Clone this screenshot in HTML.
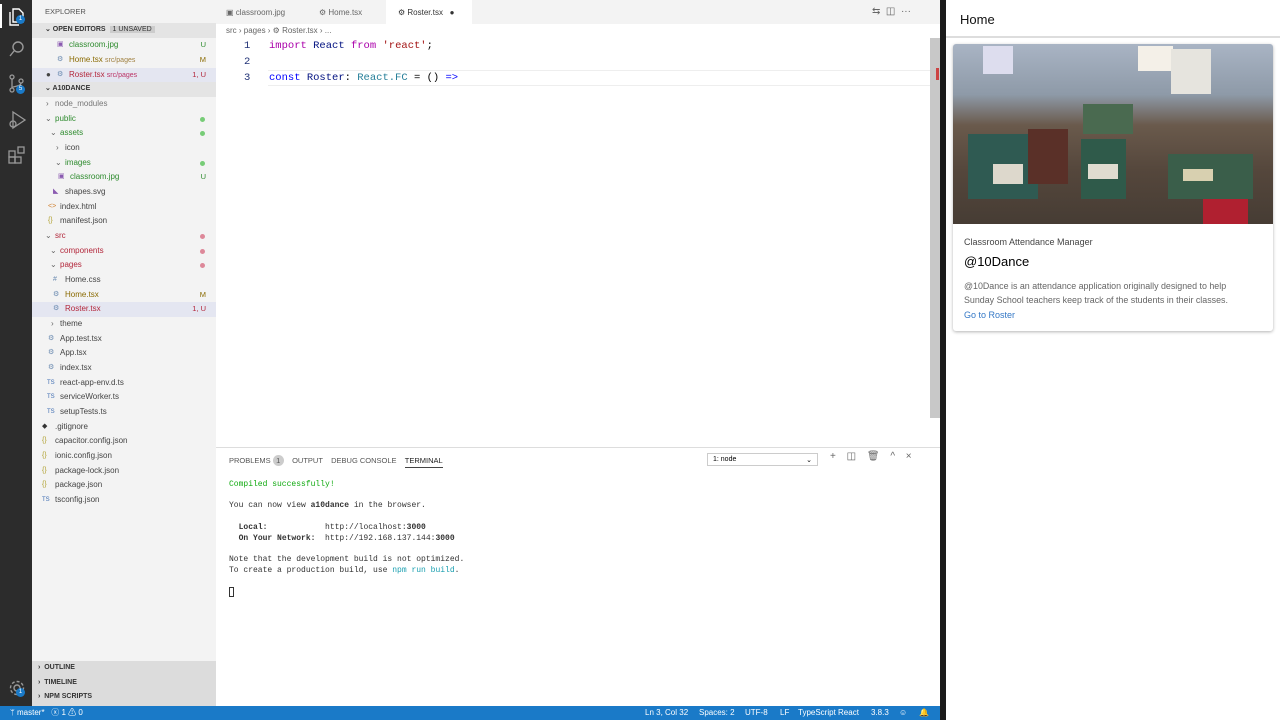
<!DOCTYPE html>
<html><head><meta charset="utf-8"><style>
*{margin:0;padding:0;box-sizing:border-box}
body{width:1280px;height:720px;overflow:hidden;position:relative;font-family:"Liberation Sans",sans-serif;background:#fff}
.abs{position:absolute}
#act{left:0;top:0;width:32px;height:706px;background:#2c2c2c}
#exp{left:32px;top:0;width:184px;height:706px;background:#f3f3f3;font-size:8px;color:#444}
.row{position:absolute;left:0;width:184px;height:14.6px;line-height:14.6px;white-space:nowrap}
.sec{background:#e4e4e4;font-weight:bold;font-size:7px;color:#333}
.sel{background:#e4e6f1}
.g{color:#2e8b2e}.r{color:#b3263a}.y{color:#8a6a00}.gr{color:#777}
.badge{position:absolute;right:10px;font-size:7.5px}
.dot{position:absolute;right:11px;top:5px;width:5px;height:5px;border-radius:50%}
.ch{position:absolute;color:#666;font-size:8px}
.ic{position:absolute;font-size:7px;color:#6a8ab0}
.mono{font-family:"Liberation Mono",monospace}
#status{left:0;top:706px;width:940px;height:14px;background:#1a7ac8;color:#fff;font-size:8px;line-height:14px;white-space:nowrap}
#status span{position:absolute}
</style></head><body>
<div id="act" class="abs">
 <div class="abs" style="left:0;top:4px;width:2px;height:24px;background:#fff"></div>
 <svg class="abs" style="left:8px;top:7px" width="18" height="20" viewBox="0 0 18 20" fill="none" stroke="#fff" stroke-width="1.4"><path d="M5 2h6l4 4v9H5z M2 5v13h9"/></svg>
 <div class="abs" style="left:16px;top:15px;width:9px;height:9px;border-radius:50%;background:#1a7ac8;color:#fff;font-size:6px;text-align:center;line-height:9px">1</div>
 <svg class="abs" style="left:8px;top:40px" width="18" height="18" fill="none" stroke="#999" stroke-width="1.4"><circle cx="10" cy="7" r="5"/><path d="M6 11l-4 5"/></svg>
 <svg class="abs" style="left:8px;top:74px" width="18" height="20" fill="none" stroke="#999" stroke-width="1.3"><circle cx="4" cy="3" r="2"/><circle cx="4" cy="16" r="2"/><circle cx="13" cy="7" r="2"/><path d="M4 5v9M13 9c0 4-9 3-9 5"/></svg>
 <div class="abs" style="left:16px;top:85px;width:9px;height:9px;border-radius:50%;background:#1a7ac8;color:#fff;font-size:6px;text-align:center;line-height:9px">5</div>
 <svg class="abs" style="left:7px;top:110px" width="20" height="20" fill="none" stroke="#999" stroke-width="1.3"><path d="M6 2l12 8-12 8z"/><circle cx="6" cy="14" r="3"/></svg>
 <svg class="abs" style="left:7px;top:145px" width="20" height="20" fill="none" stroke="#999" stroke-width="1.3"><rect x="2" y="6" width="6" height="6"/><rect x="2" y="12" width="6" height="6"/><rect x="8" y="12" width="6" height="6"/><rect x="11" y="2" width="6" height="6"/></svg>
 <svg class="abs" style="left:8px;top:679px" width="18" height="18" fill="none" stroke="#999" stroke-width="1.4"><circle cx="9" cy="9" r="3"/><circle cx="9" cy="9" r="6.5" stroke-dasharray="3 2"/></svg>
 <div class="abs" style="left:16px;top:688px;width:9px;height:9px;border-radius:50%;background:#1a7ac8;color:#fff;font-size:6px;text-align:center;line-height:9px">1</div>
</div>
<div id="exp" class="abs">
 <div class="abs" style="left:13px;top:7px;font-size:7.5px;color:#555">EXPLORER</div>
 <div class="row sec" style="top:23px;padding-left:13px">⌄ OPEN EDITORS <span style="background:#ccc;padding:0 3px;font-weight:normal;margin-left:2px">1 UNSAVED</span></div>
 <div class="row g" style="top:38px;padding-left:37px"><span class="ic" style="left:25px;color:#8a5ab0">▣</span>classroom.jpg<span class="badge">U</span></div>
 <div class="row y" style="top:53px;padding-left:37px"><span class="ic" style="left:25px">⚙</span>Home.tsx <span style="font-size:7px;color:#a08040">src/pages</span><span class="badge">M</span></div>
 <div class="row r sel" style="top:67.5px;padding-left:37px"><span style="position:absolute;left:14px;color:#444">●</span><span class="ic" style="left:25px">⚙</span>Roster.tsx <span style="font-size:7px;color:#b36">src/pages</span><span class="badge">1, U</span></div>
 <div class="row sec" style="top:82px;padding-left:13px">⌄ A10DANCE</div>
 <div class="row gr" style="top:97px;padding-left:23px"><span class="ch" style="left:14px">›</span>node_modules</div>
 <div class="row g" style="top:111.5px;padding-left:23px"><span class="ch" style="left:13px">⌄</span>public<span class="dot" style="background:#7c7"></span></div>
 <div class="row g" style="top:126px;padding-left:28px"><span class="ch" style="left:18px">⌄</span>assets<span class="dot" style="background:#7c7"></span></div>
 <div class="row" style="top:141px;padding-left:33px"><span class="ch" style="left:24px">›</span>icon</div>
 <div class="row g" style="top:155.5px;padding-left:33px"><span class="ch" style="left:23px">⌄</span>images<span class="dot" style="background:#7c7"></span></div>
 <div class="row g" style="top:170px;padding-left:38px"><span class="ic" style="left:26px;color:#8a5ab0">▣</span>classroom.jpg<span class="badge">U</span></div>
 <div class="row" style="top:185px;padding-left:33px"><span class="ic" style="left:21px;color:#8a5ab0">◣</span>shapes.svg</div>
 <div class="row" style="top:199.5px;padding-left:28px"><span class="ic" style="left:16px;color:#d08030">&lt;&gt;</span>index.html</div>
 <div class="row" style="top:214px;padding-left:28px"><span class="ic" style="left:16px;color:#b0a030">{}</span>manifest.json</div>
 <div class="row r" style="top:229px;padding-left:23px"><span class="ch" style="left:13px">⌄</span>src<span class="dot" style="background:#d89"></span></div>
 <div class="row r" style="top:243.5px;padding-left:28px"><span class="ch" style="left:18px">⌄</span>components<span class="dot" style="background:#d89"></span></div>
 <div class="row r" style="top:258px;padding-left:28px"><span class="ch" style="left:18px">⌄</span>pages<span class="dot" style="background:#d89"></span></div>
 <div class="row" style="top:273px;padding-left:33px"><span class="ic" style="left:21px">#</span>Home.css</div>
 <div class="row y" style="top:287.5px;padding-left:33px"><span class="ic" style="left:21px">⚙</span>Home.tsx<span class="badge">M</span></div>
 <div class="row r sel" style="top:302px;padding-left:33px"><span class="ic" style="left:21px">⚙</span>Roster.tsx<span class="badge">1, U</span></div>
 <div class="row" style="top:317px;padding-left:28px"><span class="ch" style="left:19px">›</span>theme</div>
 <div class="row" style="top:331.5px;padding-left:28px"><span class="ic" style="left:16px">⚙</span>App.test.tsx</div>
 <div class="row" style="top:346px;padding-left:28px"><span class="ic" style="left:16px">⚙</span>App.tsx</div>
 <div class="row" style="top:361px;padding-left:28px"><span class="ic" style="left:16px">⚙</span>index.tsx</div>
 <div class="row" style="top:375.5px;padding-left:28px"><span class="ic" style="left:15px;font-size:6px;color:#3a6ab0">TS</span>react-app-env.d.ts</div>
 <div class="row" style="top:390px;padding-left:28px"><span class="ic" style="left:15px;font-size:6px;color:#3a6ab0">TS</span>serviceWorker.ts</div>
 <div class="row" style="top:405px;padding-left:28px"><span class="ic" style="left:15px;font-size:6px;color:#3a6ab0">TS</span>setupTests.ts</div>
 <div class="row" style="top:419.5px;padding-left:23px"><span class="ic" style="left:10px;color:#333">◆</span>.gitignore</div>
 <div class="row" style="top:434px;padding-left:23px"><span class="ic" style="left:10px;color:#b0a030">{}</span>capacitor.config.json</div>
 <div class="row" style="top:449px;padding-left:23px"><span class="ic" style="left:10px;color:#b0a030">{}</span>ionic.config.json</div>
 <div class="row" style="top:463.5px;padding-left:23px"><span class="ic" style="left:10px;color:#b0a030">{}</span>package-lock.json</div>
 <div class="row" style="top:478px;padding-left:23px"><span class="ic" style="left:10px;color:#b0a030">{}</span>package.json</div>
 <div class="row" style="top:493px;padding-left:23px"><span class="ic" style="left:10px;font-size:6px;color:#3a6ab0">TS</span>tsconfig.json</div>
 <div class="abs" style="left:0;top:661px;width:184px;height:45px;background:#dcdcdc"></div>
 <div class="row sec" style="top:661px;padding-left:6px;background:none">›&nbsp; OUTLINE</div>
 <div class="row sec" style="top:676px;padding-left:6px;background:none">›&nbsp; TIMELINE</div>
 <div class="row sec" style="top:690px;padding-left:6px;background:none">›&nbsp; NPM SCRIPTS</div>
</div>
<!-- tabs -->
<div class="abs" style="left:216px;top:0;width:724px;height:24px;background:#f3f3f3;font-size:8px;color:#666">
 <span class="abs" style="left:10px;top:8px">▣ classroom.jpg</span>
 <span class="abs" style="left:103px;top:8px">⚙ Home.tsx</span>
 <div class="abs" style="left:170px;top:0;width:86px;height:24px;background:#fff"></div>
 <span class="abs" style="left:182px;top:8px;color:#333">⚙ Roster.tsx &nbsp;&nbsp;●</span>
 <span class="abs" style="left:656px;top:6px;font-size:10px;color:#666">⇆ &nbsp;◫ &nbsp;···</span>
</div>
<div class="abs" style="left:226px;top:26px;font-size:8px;color:#666">src › pages › ⚙ Roster.tsx › ...</div>
<div class="abs mono" style="left:216px;top:38px;width:714px;font-size:10.5px;line-height:16px;color:#000">
 <div style="position:absolute;left:52px;top:32px;width:662px;height:16px;border-top:1px solid #eee;border-bottom:1px solid #eee"></div>
 <div style="position:relative"><span style="position:absolute;left:28px;color:#237">1</span><span style="position:absolute;left:53px"><span style="color:#a0a">import</span> <span style="color:#001080">React</span> <span style="color:#a0a">from</span> <span style="color:#a31515">'react'</span>;</span></div>
 <div style="position:relative;top:16px"><span style="position:absolute;left:28px;color:#237">2</span></div>
 <div style="position:relative;top:32px"><span style="position:absolute;left:28px;color:#237">3</span><span style="position:absolute;left:53px"><span style="color:#00f">const</span> <span style="color:#001080">Roster</span>: <span style="color:#267f99">React.FC</span> = () <span style="color:#00f">=&gt;</span></span></div>
</div>
<div class="abs" style="left:930px;top:38px;width:10px;height:380px;background:#c8c8c8"></div>
<div class="abs" style="left:936px;top:68px;width:3px;height:12px;background:#c44"></div>
<!-- panel -->
<div class="abs" style="left:216px;top:447px;width:724px;height:1px;background:#ddd"></div>
<div class="abs" style="left:229px;top:455px;font-size:7.5px;color:#555">PROBLEMS <span style="display:inline-block;width:11px;height:11px;border-radius:50%;background:#ccc;text-align:center;line-height:11px">1</span> &nbsp;&nbsp; OUTPUT &nbsp;&nbsp; DEBUG CONSOLE &nbsp;&nbsp; <span style="color:#222;border-bottom:1px solid #444;padding-bottom:2px">TERMINAL</span></div>
<div class="abs" style="left:707px;top:453px;width:111px;height:13px;border:1px solid #ccc;font-size:7px;padding:2px 5px">1: node<span style="float:right">⌄</span></div>
<div class="abs" style="left:830px;top:451px;font-size:10px;color:#666;word-spacing:8px">+ ◫ 🗑 ^ ×</div>
<div class="abs mono" style="left:229px;top:480px;font-size:8px;line-height:10.7px;color:#333;white-space:pre"><span style="color:#1a1">Compiled successfully!</span>

You can now view <b>a10dance</b> in the browser.

  <b>Local:</b>            http://localhost:<b>3000</b>
  <b>On Your Network:</b>  http://192.168.137.144:<b>3000</b>

Note that the development build is not optimized.
To create a production build, use <span style="color:#1a9fb0">npm run build</span>.

</div>
<div class="abs" style="left:229px;top:587px;width:5px;height:10px;border:1px solid #333"></div>
<div id="status" class="abs"><span style="left:10px">ᛘ master* &nbsp;&nbsp;ⓧ 1 ⚠ 0</span><span style="left:645px">Ln 3, Col 32</span><span style="left:699px">Spaces: 2</span><span style="left:745px">UTF-8</span><span style="left:780px">LF</span><span style="left:798px">TypeScript React</span><span style="left:871px">3.8.3</span><span style="left:899px">☺</span><span style="left:919px">🔔</span></div>
<!-- right -->
<div class="abs" style="left:940px;top:0;width:6px;height:720px;background:#1a1a1a"></div>
<div class="abs" style="left:946px;top:0;width:334px;height:720px;background:#fff">
 <div class="abs" style="left:14px;top:12px;font-size:13px;color:#111">Home</div>
 <div class="abs" style="left:0;top:36px;width:334px;height:2px;background:#ddd"></div>
 <div class="abs" style="left:7px;top:44px;width:320px;height:287px;border-radius:3px;box-shadow:0 1px 3px rgba(0,0,0,.3);overflow:hidden">
  <div style="height:180px;background:linear-gradient(180deg,#a9b4c4 0%,#8e9aa8 28%,#6a5a4c 45%,#55473c 70%,#463c34 100%);position:relative">
   <div class="abs" style="left:30px;top:2px;width:30px;height:28px;background:#dde"></div>
   <div class="abs" style="left:185px;top:2px;width:35px;height:25px;background:#f4f0e8"></div>
   <div class="abs" style="left:218px;top:5px;width:40px;height:45px;background:#e6e4de"></div>
   <div class="abs" style="left:15px;top:90px;width:70px;height:65px;background:#2f5a52"></div>
   <div class="abs" style="left:128px;top:95px;width:45px;height:60px;background:#2f5a4a"></div>
   <div class="abs" style="left:215px;top:110px;width:85px;height:45px;background:#3a5e4a"></div>
   <div class="abs" style="left:75px;top:85px;width:40px;height:55px;background:#5a3028"></div>
   <div class="abs" style="left:250px;top:155px;width:45px;height:25px;background:#b02030"></div>
   <div class="abs" style="left:130px;top:60px;width:50px;height:30px;background:#4a6a50"></div>
   <div class="abs" style="left:40px;top:120px;width:30px;height:20px;background:#ddd8cc"></div>
   <div class="abs" style="left:135px;top:120px;width:30px;height:15px;background:#e0dcd0"></div>
   <div class="abs" style="left:230px;top:125px;width:30px;height:12px;background:#d8d0b0"></div>
  </div>
  <div class="abs" style="left:11px;top:193px;font-size:9px;color:#444">Classroom Attendance Manager</div>
  <div class="abs" style="left:11px;top:210px;font-size:13px;color:#000">@10Dance</div>
  <div class="abs" style="left:11px;top:235px;font-size:8.9px;line-height:14px;color:#666;width:285px">@10Dance is an attendance application originally designed to help Sunday School teachers keep track of the students in their classes.</div>
  <div class="abs" style="left:11px;top:266px;font-size:9px;color:#3478c6">Go to Roster</div>
 </div>
</div>
</body></html>
